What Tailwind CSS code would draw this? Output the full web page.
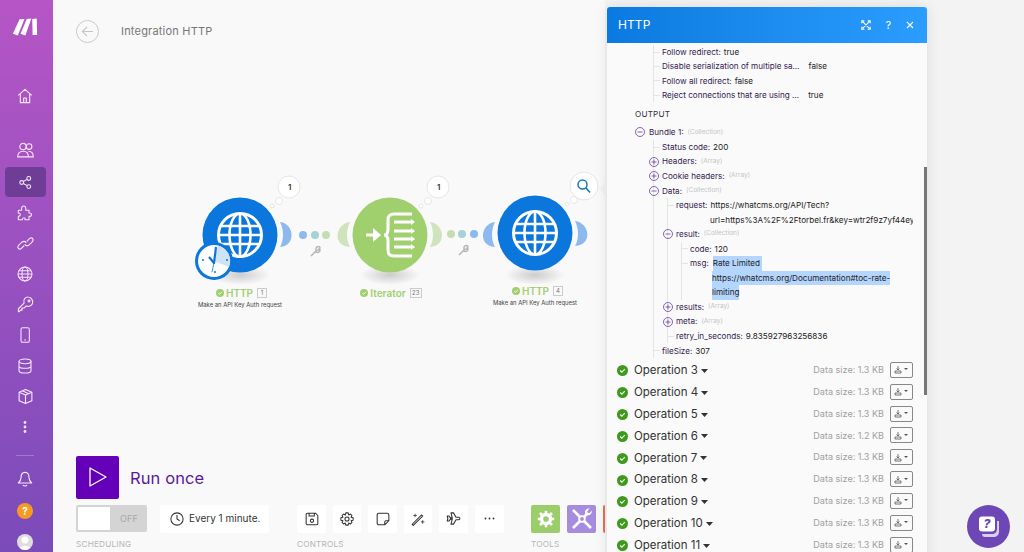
<!DOCTYPE html>
<html lang="en">
<head>
    <meta charset="UTF-8">
    <title>Integration HTTP</title>
    <script src="https://cdn.jsdelivr.net/npm/@tailwindcss/browser@4"></script>
</head>
<body class="w-[1024px] h-[552px] overflow-hidden flex bg-[#f9f9f9] font-['Inter',sans-serif] text-[#333]">

    <!-- Sidebar -->
    <nav class="w-[53px] h-full shrink-0 flex flex-col items-center pr-[3px] bg-gradient-to-b from-[#b655c6] to-[#7a4bb9] text-[#f7e6fb]">
        <svg class="mt-[18px] w-[26px] h-[18px]" viewBox="0 0 27 20" fill="#fff"><path d="M0 17.500 L7.500 1.500 L13 1 L5.500 19.500Z"/><path d="M8.500 17.500 L15.500 1 L20.500 0.500 L14 19.500Z"/><path d="M21.500 1 L26.500 0.500 L27 19 H22Z"/></svg>
        <svg class="mt-[52px] w-[16px] h-[16px]" viewBox="0 0 24 24" fill="none" stroke="currentColor" stroke-width="1.700" stroke-linejoin="round"><path d="M2 11 L12 2 L22 11 M5 9 V22 H19 V9 M10 22 V15 H14 V22"/></svg>
        <svg class="mt-[38px] w-[17px] h-[17px]" viewBox="0 0 24 24" fill="none" stroke="currentColor" stroke-width="1.600"><circle cx="8.500" cy="6.500" r="4.500"/><circle cx="17" cy="6.500" r="4"/><path d="M1 21 C1 15 5 13 9 13 C13 13 16 15 16 21Z"/><path d="M16 13 C20 13 23 16 23 21 H16"/></svg>
        <div class="mt-[8px] w-[41px] h-[30px] rounded-[4px] bg-[#6f3d96] flex items-center justify-center">
            <svg class="w-[13px] h-[13px]" viewBox="0 0 24 24" fill="none" stroke="currentColor" stroke-width="2"><circle cx="18" cy="4.500" r="3.500"/><circle cx="5" cy="12" r="3.500"/><circle cx="18" cy="19.500" r="3.500"/><path d="M8 10.300 L15 6.200 M8 13.700 L15 17.800"/></svg>
        </div>
        <svg class="mt-[8px] w-[16px] h-[16px]" viewBox="0 0 24 24" fill="none" stroke="currentColor" stroke-width="1.600" stroke-linejoin="round"><path d="M2 8 H7 C6 3 8 1.500 10 1.500 C12 1.500 14 3 13 8 H18 V12 C23 11 23 18 18 17 V22 H12 C13 18 8 18 8 22 H2 V17 C6 17 6 12 2 12Z"/></svg>
        <svg class="mt-[14px] w-[17px] h-[17px]" viewBox="0 0 24 24" fill="none" stroke="currentColor" stroke-width="1.600"><path d="M10 15 C6 20 3 21 2 19 C0 17 2 14 7 10 C10 8 12 9 13 11"/><path d="M14 9 C18 4 21 3 22 5 C24 7 22 10 17 14 C14 16 12 15 11 13"/></svg>
        <svg class="mt-[14px] w-[16px] h-[16px]" viewBox="0 0 24 24" fill="none" stroke="currentColor" stroke-width="1.600"><circle cx="12" cy="12" r="10.500"/><ellipse cx="12" cy="12" rx="4.500" ry="10.500"/><path d="M1.500 12 H22.500 M3 7 H21 M3 17 H21"/></svg>
        <svg class="mt-[14px] w-[17px] h-[17px]" viewBox="0 0 24 24" fill="none" stroke="currentColor" stroke-width="1.600" stroke-linejoin="round"><path d="M2 22 V18 L10 10 C8 4 13 1 16 1.500 C20 2 23 6 22 10 C21 14 16 15.500 13 14 L10 17 H7 V20 H5 L3 22Z"/><circle cx="17" cy="7" r="1.300"/></svg>
        <svg class="mt-[14px] w-[16px] h-[16px]" viewBox="0 0 24 24" fill="none" stroke="currentColor" stroke-width="1.600"><rect x="6" y="1" width="12.500" height="22" rx="2.500"/><path d="M11 19.500 H13.500"/></svg>
        <svg class="mt-[15px] w-[16px] h-[16px]" viewBox="0 0 24 24" fill="none" stroke="currentColor" stroke-width="1.600"><ellipse cx="12" cy="5" rx="9" ry="3.500"/><path d="M3 5 V19 C3 21 7 22.500 12 22.500 C17 22.500 21 21 21 19 V5 M3 12 C3 14 7 15.500 12 15.500 C17 15.500 21 14 21 12"/></svg>
        <svg class="mt-[14px] w-[17px] h-[17px]" viewBox="0 0 24 24" fill="none" stroke="currentColor" stroke-width="1.600" stroke-linejoin="round"><path d="M12 2 L21 6 V18 L12 22 L3 18 V6Z M3 6 L12 10 L21 6 M12 10 V22 M7.500 4 L16.500 8"/></svg>
        <svg class="mt-[16px] w-[4px] h-[12px]" viewBox="0 0 4 12" fill="currentColor"><circle cx="2" cy="1.500" r="1.400"/><circle cx="2" cy="6" r="1.400"/><circle cx="2" cy="10.500" r="1.400"/></svg>
        <div class="mt-[22px] w-[18px] h-px bg-white/25"></div>
        <svg class="mt-[15px] w-[16px] h-[16px]" viewBox="0 0 24 24" fill="none" stroke="currentColor" stroke-width="1.700" stroke-linejoin="round"><path d="M12 2 C7 2 6 6 6 10 C6 14 4 16 2 18 H22 C20 16 18 14 18 10 C18 6 17 2 12 2Z M9 21 C10 23 14 23 15 21"/></svg>
        <div class="mt-[16px] w-[16px] h-[16px] rounded-full bg-[#f59a23] text-white text-[10px] font-bold leading-[16px] text-center">?</div>
        <div class="mt-[15px] w-[16px] h-[16px] rounded-full bg-[#ddd] overflow-hidden flex justify-center">
            <svg class="w-[16px] h-[16px]" viewBox="0 0 16 16" fill="#fff"><circle cx="8" cy="6" r="3.500"/><path d="M1 17 C2 10 14 10 15 17Z"/></svg>
        </div>
    </nav>

    <!-- Main -->
    <main class="relative flex-1 h-full flex flex-col">
        <header class="flex items-center pl-[23px] pt-[20px]">
            <div class="w-[23px] h-[23px] rounded-full border border-[#c9c9c9] flex items-center justify-center">
                <svg class="w-[13px] h-[13px]" viewBox="0 0 14 14" fill="none" stroke="#c4c4c4" stroke-width="1.200"><path d="M13 7 H1.500 M6.500 2 L1.500 7 L6.500 12"/></svg>
            </div>
            <h1 class="ml-[22px] text-[11px] text-[#777] tracking-[0.2px]">Integration HTTP</h1>
        </header>

        <div class="flex-1"></div>

        <!-- Bottom controls -->
        <section class="pl-[23px] pb-[2px]">
            <div class="flex items-center">
                <button class="w-[43px] h-[43px] rounded-[2px] bg-[#6300b8] flex items-center justify-center">
                    <svg class="w-[20px] h-[22px]" viewBox="0 0 20 22" fill="none" stroke="#fff" stroke-width="1.300" stroke-linejoin="round"><path d="M2 2 L18 11 L2 20Z"/></svg>
                </button>
                <span class="ml-[11px] mt-[3px] text-[16.500px] text-[#5a189f] tracking-[0.1px]">Run once</span>
            </div>
            <div class="mt-[6px] flex text-[8.200px] text-[#b5b5b5] tracking-[0.2px]">
                <div class="w-[221px] flex flex-col">
                    <div class="flex items-center h-[28px]">
                        <div class="w-[71px] h-[27px] rounded-[2px] bg-[#d4d4d4] p-[2px] flex items-center">
                            <div class="w-[32px] h-full bg-white"></div>
                            <span class="ml-[10px] text-[9px] text-[#a8a8a8]">OFF</span>
                        </div>
                        <div class="ml-[13px] w-[109px] h-[28px] rounded-[2px] bg-white flex items-center pl-[10px] text-[#333] text-[10px] tracking-normal">
                            <svg class="w-[14px] h-[14px] mr-[5px]" viewBox="0 0 24 24" fill="none" stroke="#333" stroke-width="1.800"><circle cx="12" cy="12" r="10.500"/><path d="M12 5 V12 L16.500 15"/></svg>
                            Every 1 minute.
                        </div>
                    </div>
                    <span class="mt-[5px]">SCHEDULING</span>
                </div>
                <div class="w-[234px] flex flex-col">
                    <div class="flex gap-[7px] text-[#333]">
                        <div class="w-[29px] h-[28px] rounded-[2px] bg-white flex items-center justify-center">
                            <svg class="w-[14px] h-[14px]" viewBox="0 0 24 24" fill="none" stroke="currentColor" stroke-width="1.800" stroke-linejoin="round"><path d="M4 2 H18 L22 6 V20 C22 21 21 22 20 22 H4 C3 22 2 21 2 20 V4 C2 3 3 2 4 2Z M7 2 V7 H16 V2"/><circle cx="12" cy="15" r="2.800"/></svg>
                        </div>
                        <div class="w-[28px] h-[28px] rounded-[2px] bg-white flex items-center justify-center">
                            <svg class="w-[14px] h-[14px]" viewBox="0 0 24 24" fill="none" stroke="currentColor" stroke-width="1.800" stroke-linejoin="round"><path d="M10 1.500 H14 L15 5 L18 3.500 L20.500 6 L19 9 L22.500 10 V14 L19 15 L20.500 18 L18 20.500 L15 19 L14 22.500 H10 L9 19 L6 20.500 L3.500 18 L5 15 L1.500 14 V10 L5 9 L3.500 6 L6 3.500 L9 5Z"/><circle cx="12" cy="12" r="3.500"/></svg>
                        </div>
                        <div class="w-[29px] h-[28px] rounded-[2px] bg-white flex items-center justify-center">
                            <svg class="w-[14px] h-[14px]" viewBox="0 0 24 24" fill="none" stroke="currentColor" stroke-width="1.800" stroke-linejoin="round"><path d="M5 2 H19 C21 2 22 3 22 5 V15 L15 22 H5 C3 22 2 21 2 19 V5 C2 3 3 2 5 2Z M22 15 H17 C16 15 15 16 15 17 V22"/></svg>
                        </div>
                        <div class="w-[28px] h-[28px] rounded-[2px] bg-white flex items-center justify-center">
                            <svg class="w-[14px] h-[14px]" viewBox="0 0 24 24" fill="none" stroke="currentColor" stroke-width="1.800"><path d="M2 21 L18 5 L20 7 L4 23Z"/><path d="M7 3 V9 M4 6 H10 M20 14 V20 M17 17 H23" stroke-width="1.400"/></svg>
                        </div>
                        <div class="w-[29px] h-[28px] rounded-[2px] bg-white flex items-center justify-center">
                            <svg class="w-[15px] h-[15px]" viewBox="0 0 24 24" fill="none" stroke="currentColor" stroke-width="1.700" stroke-linejoin="round"><path d="M2 8 H5 L7 11 H10 L8 3 H12 L16 10 H20 C23 10 23 14 20 14 H16 L12 21 H8 L10 13 H7 L5 16 H2 L3 12Z"/></svg>
                        </div>
                        <div class="w-[29px] h-[28px] rounded-[2px] bg-white flex items-center justify-center">
                            <svg class="w-[11px] h-[3px]" viewBox="0 0 11 3" fill="currentColor"><circle cx="1.500" cy="1.500" r="0.900"/><circle cx="5.500" cy="1.500" r="0.900"/><circle cx="9.500" cy="1.500" r="0.900"/></svg>
                        </div>
                    </div>
                    <span class="mt-[5px]">CONTROLS</span>
                </div>
                <div class="flex flex-col">
                    <div class="flex gap-[7px]">
                        <div class="w-[29px] h-[28px] rounded-[2px] bg-[#9bcd6b] flex items-center justify-center">
                            <svg class="w-[18px] h-[18px]" viewBox="0 0 24 24" fill="none" stroke="#fff" stroke-width="4.500"><circle cx="12" cy="12" r="6"/><path d="M12 1 V5 M12 19 V23 M1 12 H5 M19 12 H23 M4 4 L7 7 M17 17 L20 20 M4 20 L7 17 M17 7 L20 4" stroke-width="3.500"/></svg>
                        </div>
                        <div class="w-[29px] h-[28px] rounded-[2px] bg-[#a68bdf] flex items-center justify-center">
                            <svg class="w-[24px] h-[24px]" viewBox="0 0 24 24" fill="none" stroke="#fff" stroke-width="2.600"><path d="M3 3 L21 21 M17 7 L3 21"/><path d="M22 3.500 L19 6.500 L17 5 L19.500 1.500 C16 1 14 4 15.500 7.500 C18 9.500 22 8 22 3.500Z" fill="#fff" stroke="none"/><circle cx="12" cy="12" r="2.800" fill="#a68bdf" stroke-width="1.800"/></svg>
                        </div>
                        <div class="w-[29px] h-[28px] rounded-[2px] bg-[#ea6f52]"></div>
                    </div>
                    <span class="mt-[5px]">TOOLS</span>
                </div>
            </div>
        </section>

        <!-- Scenario canvas, coordinates are the diagram itself -->
        <svg class="absolute left-0 top-0 w-[971px] h-[552px]" viewBox="53 0 971 552" fill="none">
            <defs>
                <radialGradient id="nodeShadow"><stop offset="0" stop-color="#000" stop-opacity="0.180"/><stop offset="1" stop-color="#000" stop-opacity="0"/></radialGradient>
                <g id="globe" stroke="#fff" stroke-width="3">
                    <circle cx="0" cy="0" r="21.500"/>
                    <ellipse cx="0" cy="0" rx="10.500" ry="21.500" stroke-width="2.600"/>
                    <path d="M0 -21.500 V21.500 M-21.500 0 H21.500 M-19.500 -9 H19.500 M-19.500 9 H19.500" stroke-width="2.600"/>
                </g>
            </defs>

            <ellipse cx="240" cy="275" rx="30" ry="10" fill="url(#nodeShadow)"/>
            <ellipse cx="390" cy="275" rx="30" ry="10" fill="url(#nodeShadow)"/>
            <ellipse cx="535" cy="275" rx="30" ry="10" fill="url(#nodeShadow)"/>

            <!-- HTTP 1 -->
            <path d="M280 222 C295 224 296 246 280 247 C284 240 284 230 280 222Z" fill="#8db9ee"/>
            <circle cx="240" cy="235" r="37.500" fill="#0b76dc"/>
            <use href="#globe" x="240" y="235"/>
            <circle cx="214" cy="261" r="19" fill="#0b76dc"/>
            <circle cx="214" cy="261" r="16" fill="#fff"/>
            <path d="M214 261 L218 245.500 A16 16 0 0 1 229 267Z" fill="#cfe3f7"/>
            <path d="M216 247 L214 263 L209 257" stroke="#0b76dc" stroke-width="2.200" stroke-linejoin="round"/>
            <path d="M214 263 L212 272" stroke="#0b76dc" stroke-width="0.800"/>
            <circle cx="203" cy="260" r="1" fill="#0b76dc"/><circle cx="227" cy="260" r="1" fill="#0b76dc"/><circle cx="215" cy="272" r="1" fill="#0b76dc"/>

            <!-- connector 1 -->
            <circle cx="303" cy="235" r="4" fill="#8db9ee"/><circle cx="315" cy="235" r="4" fill="#a6d2d3"/><circle cx="326" cy="235" r="4" fill="#c5deb1"/>
            <path d="M311 256 L317 250 M316 248 C317 246 320 246 320 248 L318 250 L320 250 C320 252 318 253 316 252Z" stroke="#b5b5b5" stroke-width="1.500"/>
            <path d="M350 222 C335 224 332 246 350 247 C346 240 346 230 350 222Z" fill="#cfe3bd"/>

            <!-- Iterator -->
            <circle cx="390" cy="235" r="37.500" fill="#a0cf6e"/>
            <path d="M412 214 H394 Q388 214 388 220 V229 Q388 235 384 235 Q388 235 388 241 V250 Q388 256 394 256 H412" stroke="#fff" stroke-width="3"/>
            <path d="M394 222 H411 M394 231 H411 M394 239 H411 M394 247 H411" stroke="#fff" stroke-width="3"/>
            <path d="M411 219 L415 222 L411 225Z M411 228 L415 231 L411 234Z M411 236 L415 239 L411 242Z M411 244 L415 247 L411 250Z" fill="#fff"/>
            <path d="M366 235 H376" stroke="#fff" stroke-width="3"/>
            <path d="M373 228 L381 235 L373 242Z" fill="#fff"/>
            <path d="M430 222 C445 224 447 246 430 247 C434 240 434 230 430 222Z" fill="#cfe3bd"/>

            <!-- connector 2 -->
            <circle cx="451" cy="234" r="4" fill="#c5deb1"/><circle cx="462" cy="234" r="4" fill="#a6d2d3"/><circle cx="474" cy="234" r="4" fill="#8db9ee"/>
            <path d="M459 255 L465 249 M464 247 C465 245 468 245 468 247 L466 249 L468 249 C468 251 466 252 464 251Z" stroke="#b5b5b5" stroke-width="1.500"/>

            <!-- HTTP 4 -->
            <path d="M495 222 C480 224 478 246 495 247 C491 240 491 230 495 222Z" fill="#8db9ee"/>
            <circle cx="535" cy="233" r="37.500" fill="#0b76dc"/>
            <use href="#globe" x="535" y="233"/>
            <path d="M575 221 C590 223 593 245 575 246 C579 239 579 229 575 221Z" fill="#8db9ee"/>

            <!-- bubbles -->
            <g fill="#fff" stroke="#e6e6e6" stroke-width="1">
                <circle cx="289" cy="187" r="11"/><circle cx="279" cy="201" r="3.500"/><circle cx="272" cy="206" r="2"/>
                <circle cx="438" cy="187" r="11"/><circle cx="428" cy="201" r="3.500"/><circle cx="421" cy="206" r="2"/>
                <circle cx="584" cy="186" r="14"/><circle cx="574" cy="200" r="3.500"/><circle cx="567" cy="204" r="2"/>
            </g>
            <circle cx="582.500" cy="184.500" r="4.500" stroke="#1a78b5" stroke-width="1.500"/>
            <path d="M586 188 L590 192.500" stroke="#1a78b5" stroke-width="1.700"/>
        </svg>

        <span class="absolute left-[235px] top-[181px] w-[2px] text-[8px] font-semibold text-[#333] leading-[12px]">1</span>
        <span class="absolute left-[384px] top-[181px] w-[2px] text-[8px] font-semibold text-[#333] leading-[12px]">1</span>

        <!-- Node labels -->
        <div class="absolute left-[127px] top-[286px] w-[120px] flex flex-col items-center">
            <div class="ml-[3px] flex items-center h-[14px] text-[10px] font-semibold text-[#a3cf72]">
                <svg class="w-[8px] h-[8px] mr-[2px]" viewBox="0 0 8 8"><circle cx="4" cy="4" r="4" fill="#a0cf6e"/><path d="M2.200 4 L3.500 5.300 L5.800 2.900" fill="none" stroke="#fff" stroke-width="0.900"/></svg>HTTP
                <span class="ml-[4px] w-[10px] h-[10px] border border-[#ccc] text-[6px] font-normal text-[#777] leading-[8px] text-center">1</span>
            </div>
            <span class="text-[5.900px] leading-[10px] text-[#444] whitespace-nowrap">Make an API Key Auth request</span>
        </div>
        <div class="absolute left-[277px] top-[286px] w-[120px] flex flex-col items-center">
            <div class="ml-[2px] flex items-center h-[14px] text-[10px] font-semibold text-[#a3cf72]">
                <svg class="w-[8px] h-[8px] mr-[2px]" viewBox="0 0 8 8"><circle cx="4" cy="4" r="4" fill="#a0cf6e"/><path d="M2.200 4 L3.500 5.300 L5.800 2.900" fill="none" stroke="#fff" stroke-width="0.900"/></svg>Iterator
                <span class="ml-[4px] w-[12px] h-[10px] border border-[#ccc] text-[6px] font-normal text-[#777] leading-[8px] text-center">23</span>
            </div>
        </div>
        <div class="absolute left-[422px] top-[284px] w-[120px] flex flex-col items-center">
            <div class="ml-[5px] flex items-center h-[14px] text-[10px] font-semibold text-[#a3cf72]">
                <svg class="w-[8px] h-[8px] mr-[2px]" viewBox="0 0 8 8"><circle cx="4" cy="4" r="4" fill="#a0cf6e"/><path d="M2.200 4 L3.500 5.300 L5.800 2.900" fill="none" stroke="#fff" stroke-width="0.900"/></svg>HTTP
                <span class="ml-[4px] w-[10px] h-[10px] border border-[#ccc] text-[6px] font-normal text-[#777] leading-[8px] text-center">4</span>
            </div>
            <span class="text-[5.900px] leading-[10px] text-[#444] whitespace-nowrap">Make an API Key Auth request</span>
        </div>

        <!-- Log panel backdrop -->
        <div class="absolute left-[552px] top-0 right-0 bottom-0 bg-[#f3f3f3]"></div>
        <div class="absolute left-[546px] top-[180px] w-0 h-0 border-y-[9px] border-y-transparent border-r-[8px] border-r-[#f3f3f3]"></div>

        <!-- Log panel -->
        <div class="absolute left-[554px] top-[7px] w-[320px] h-[560px] rounded-t-[3px] bg-[#fafafa] shadow-[0_0_14px_rgba(0,0,0,0.1)] overflow-hidden flex flex-col">
            <div class="h-[36px] shrink-0 flex items-center pl-[11px] pr-[13px] bg-gradient-to-r from-[#0a7ae0] to-[#2a9dff] text-white">
                <span class="text-[12px] tracking-[0.1px] flex-1">HTTP</span>
                <svg class="w-[10px] h-[10px] mr-[14px]" viewBox="0 0 12 12" fill="none" stroke="#fff" stroke-width="1.300"><path d="M1 4 V1 H4 M8 1 H11 V4 M1 8 V11 H4 M11 8 V11 H8 M2 2 L10 10 M10 2 L2 10"/></svg>
                <span class="text-[11px] mr-[15px] leading-none">?</span>
                <svg class="w-[8px] h-[8px]" viewBox="0 0 8 8" fill="none" stroke="#fff" stroke-width="1.100"><path d="M1 1 L7 7 M7 1 L1 7"/></svg>
            </div>

            <div class="relative flex-1 text-[8.150px] text-[#222] whitespace-nowrap">
                <div class="absolute right-0 top-[124px] w-[3px] h-[228px] bg-[#777]"></div>

                <!-- Input tail -->
                <div class="ml-[46px] mt-[2px] border-l border-[#e4e4e4] [&>div]:h-[14.300px] [&>div]:flex [&>div]:items-center [&_b]:font-normal [&_b]:text-[#33224f] [&_b]:mr-[3px]">
                    <div><i class="w-[6px] h-px bg-[#e4e4e4] mr-[2px]"></i><b>Follow redirect:</b>true</div>
                    <div><i class="w-[6px] h-px bg-[#e4e4e4] mr-[2px]"></i><b>Disable serialization of multiple sa…</b><span class="ml-[6px]">false</span></div>
                    <div><i class="w-[6px] h-px bg-[#e4e4e4] mr-[2px]"></i><b>Follow all redirect:</b>false</div>
                    <div><i class="w-[6px] h-px bg-[#e4e4e4] mr-[2px]"></i><b>Reject connections that are using …</b><span class="ml-[6px]">true</span></div>
                </div>

                <p class="pl-[28px] mt-[3px] h-[20px] leading-[18px] text-[#333] tracking-[0.2px]">OUTPUT</p>

                <!-- Output tree -->
                <div class="[&_.row]:h-[14.550px] [&_.row]:flex [&_.row]:items-center [&_b]:font-normal [&_b]:text-[#33224f] [&_b]:mr-[3px] [&_em]:not-italic [&_em]:text-[6.500px] [&_em]:text-[#c4c4c4] [&_em]:ml-[1px]">
                    <div class="row pl-[28px]">
                        <svg class="w-[10px] h-[10px] mr-[4px]" viewBox="0 0 10 10" fill="none" stroke="#6b3fa0" stroke-width="0.800"><circle cx="5" cy="5" r="4.500"/><path d="M2.500 5 H7.500"/></svg>
                        <b>Bundle 1:</b><em>(Collection)</em>
                    </div>
                    <div class="ml-[46px] border-l border-[#e4e4e4]">
                        <div class="row"><i class="w-[6px] h-px bg-[#e4e4e4] mr-[2px]"></i><b>Status code:</b>200</div>
                        <div class="row -ml-[5px]">
                            <svg class="w-[10px] h-[10px] mr-[3px]" viewBox="0 0 10 10" fill="none" stroke="#6b3fa0" stroke-width="0.800"><circle cx="5" cy="5" r="4.500"/><path d="M2.500 5 H7.500 M5 2.500 V7.500"/></svg>
                            <b>Headers:</b><em>(Array)</em>
                        </div>
                        <div class="row -ml-[5px]">
                            <svg class="w-[10px] h-[10px] mr-[3px]" viewBox="0 0 10 10" fill="none" stroke="#6b3fa0" stroke-width="0.800"><circle cx="5" cy="5" r="4.500"/><path d="M2.500 5 H7.500 M5 2.500 V7.500"/></svg>
                            <b>Cookie headers:</b><em>(Array)</em>
                        </div>
                        <div class="row -ml-[5px]">
                            <svg class="w-[10px] h-[10px] mr-[3px]" viewBox="0 0 10 10" fill="none" stroke="#6b3fa0" stroke-width="0.800"><circle cx="5" cy="5" r="4.500"/><path d="M2.500 5 H7.500"/></svg>
                            <b>Data:</b><em>(Collection)</em>
                        </div>
                        <div class="ml-[13px] border-l border-[#e4e4e4]">
                            <div class="row"><i class="w-[6px] h-px bg-[#e4e4e4] mr-[2px]"></i><b>request:</b>https://whatcms.org/API/Tech?</div>
                            <div class="row pl-[42px] w-[245px] overflow-hidden">url=https%3A%2F%2Ftorbel.fr&amp;key=wtr2f9z7yf44ey7</div>
                            <div class="row -ml-[5px]">
                                <svg class="w-[10px] h-[10px] mr-[3px]" viewBox="0 0 10 10" fill="none" stroke="#6b3fa0" stroke-width="0.800"><circle cx="5" cy="5" r="4.500"/><path d="M2.500 5 H7.500"/></svg>
                                <b>result:</b><em>(Collection)</em>
                            </div>
                            <div class="ml-[13px] border-l border-[#e4e4e4]">
                                <div class="row"><i class="w-[6px] h-px bg-[#e4e4e4] mr-[2px]"></i><b>code:</b>120</div>
                                <div class="row"><i class="w-[6px] h-px bg-[#e4e4e4] mr-[2px]"></i><b>msg:</b><span class="ml-[1px] bg-[#b4d5fe] leading-[14.550px] pr-[2px]">Rate Limited</span></div>
                                <div class="row pl-[30px]"><span class="bg-[#b4d5fe] leading-[14.550px]">https://whatcms.org/Documentation#toc-rate-</span></div>
                                <div class="row pl-[30px]"><span class="bg-[#b4d5fe] leading-[14.550px]">limiting</span></div>
                            </div>
                            <div class="row -ml-[5px]">
                                <svg class="w-[10px] h-[10px] mr-[3px]" viewBox="0 0 10 10" fill="none" stroke="#6b3fa0" stroke-width="0.800"><circle cx="5" cy="5" r="4.500"/><path d="M2.500 5 H7.500 M5 2.500 V7.500"/></svg>
                                <b>results:</b><em>(Array)</em>
                            </div>
                            <div class="row -ml-[5px]">
                                <svg class="w-[10px] h-[10px] mr-[3px]" viewBox="0 0 10 10" fill="none" stroke="#6b3fa0" stroke-width="0.800"><circle cx="5" cy="5" r="4.500"/><path d="M2.500 5 H7.500 M5 2.500 V7.500"/></svg>
                                <b>meta:</b><em>(Array)</em>
                            </div>
                            <div class="row"><i class="w-[6px] h-px bg-[#e4e4e4] mr-[2px]"></i><b>retry_in_seconds:</b>9.835927963256836</div>
                        </div>
                        <div class="row"><i class="w-[6px] h-px bg-[#e4e4e4] mr-[2px]"></i><b>fileSize:</b>307</div>
                    </div>
                </div>

                <!-- Operations -->
                <div class="mt-[2px] pl-[10px] pr-[14px] [&>div]:h-[21.850px] [&>div]:flex [&>div]:items-center [&_.op]:text-[11.500px] [&_.op]:text-[#333] [&_.sz]:ml-auto [&_.sz]:text-[9.050px] [&_.sz]:text-[#a0a0a0] [&_.sz]:-mt-[2px]">
                    <div><svg class="w-[11px] h-[11px] mr-[6px]" viewBox="0 0 12 12"><circle cx="6" cy="6" r="6" fill="#3e9a1c"/><path d="M3.500 6 L5.300 7.800 L8.500 4.500" fill="none" stroke="#fff" stroke-width="1.200"/></svg><span class="op">Operation 3</span><svg class="w-[7px] h-[4px] ml-[3px]" viewBox="0 0 7 4" fill="#333"><path d="M0 0 H7 L3.500 4Z"/></svg><span class="sz">Data size: 1.3 KB</span><span class="ml-[6px] -mt-[2px] w-[23px] h-[16px] rounded-[2px] border border-[#888] flex items-center justify-center"><svg class="w-[15px] h-[9px]" viewBox="0 0 15 9" fill="none" stroke="#555" stroke-width="0.800"><path d="M4 1 V5 M2.500 3.500 L4 5 L5.500 3.500 M1 6 V8 H7 V6 H1"/><path d="M10 3 H14 L12 5Z" fill="#555" stroke="none"/></svg></span></div>
                    <div><svg class="w-[11px] h-[11px] mr-[6px]" viewBox="0 0 12 12"><circle cx="6" cy="6" r="6" fill="#3e9a1c"/><path d="M3.500 6 L5.300 7.800 L8.500 4.500" fill="none" stroke="#fff" stroke-width="1.200"/></svg><span class="op">Operation 4</span><svg class="w-[7px] h-[4px] ml-[3px]" viewBox="0 0 7 4" fill="#333"><path d="M0 0 H7 L3.500 4Z"/></svg><span class="sz">Data size: 1.3 KB</span><span class="ml-[6px] -mt-[2px] w-[23px] h-[16px] rounded-[2px] border border-[#888] flex items-center justify-center"><svg class="w-[15px] h-[9px]" viewBox="0 0 15 9" fill="none" stroke="#555" stroke-width="0.800"><path d="M4 1 V5 M2.500 3.500 L4 5 L5.500 3.500 M1 6 V8 H7 V6 H1"/><path d="M10 3 H14 L12 5Z" fill="#555" stroke="none"/></svg></span></div>
                    <div><svg class="w-[11px] h-[11px] mr-[6px]" viewBox="0 0 12 12"><circle cx="6" cy="6" r="6" fill="#3e9a1c"/><path d="M3.500 6 L5.300 7.800 L8.500 4.500" fill="none" stroke="#fff" stroke-width="1.200"/></svg><span class="op">Operation 5</span><svg class="w-[7px] h-[4px] ml-[3px]" viewBox="0 0 7 4" fill="#333"><path d="M0 0 H7 L3.500 4Z"/></svg><span class="sz">Data size: 1.3 KB</span><span class="ml-[6px] -mt-[2px] w-[23px] h-[16px] rounded-[2px] border border-[#888] flex items-center justify-center"><svg class="w-[15px] h-[9px]" viewBox="0 0 15 9" fill="none" stroke="#555" stroke-width="0.800"><path d="M4 1 V5 M2.500 3.500 L4 5 L5.500 3.500 M1 6 V8 H7 V6 H1"/><path d="M10 3 H14 L12 5Z" fill="#555" stroke="none"/></svg></span></div>
                    <div><svg class="w-[11px] h-[11px] mr-[6px]" viewBox="0 0 12 12"><circle cx="6" cy="6" r="6" fill="#3e9a1c"/><path d="M3.500 6 L5.300 7.800 L8.500 4.500" fill="none" stroke="#fff" stroke-width="1.200"/></svg><span class="op">Operation 6</span><svg class="w-[7px] h-[4px] ml-[3px]" viewBox="0 0 7 4" fill="#333"><path d="M0 0 H7 L3.500 4Z"/></svg><span class="sz">Data size: 1.2 KB</span><span class="ml-[6px] -mt-[2px] w-[23px] h-[16px] rounded-[2px] border border-[#888] flex items-center justify-center"><svg class="w-[15px] h-[9px]" viewBox="0 0 15 9" fill="none" stroke="#555" stroke-width="0.800"><path d="M4 1 V5 M2.500 3.500 L4 5 L5.500 3.500 M1 6 V8 H7 V6 H1"/><path d="M10 3 H14 L12 5Z" fill="#555" stroke="none"/></svg></span></div>
                    <div><svg class="w-[11px] h-[11px] mr-[6px]" viewBox="0 0 12 12"><circle cx="6" cy="6" r="6" fill="#3e9a1c"/><path d="M3.500 6 L5.300 7.800 L8.500 4.500" fill="none" stroke="#fff" stroke-width="1.200"/></svg><span class="op">Operation 7</span><svg class="w-[7px] h-[4px] ml-[3px]" viewBox="0 0 7 4" fill="#333"><path d="M0 0 H7 L3.500 4Z"/></svg><span class="sz">Data size: 1.3 KB</span><span class="ml-[6px] -mt-[2px] w-[23px] h-[16px] rounded-[2px] border border-[#888] flex items-center justify-center"><svg class="w-[15px] h-[9px]" viewBox="0 0 15 9" fill="none" stroke="#555" stroke-width="0.800"><path d="M4 1 V5 M2.500 3.500 L4 5 L5.500 3.500 M1 6 V8 H7 V6 H1"/><path d="M10 3 H14 L12 5Z" fill="#555" stroke="none"/></svg></span></div>
                    <div><svg class="w-[11px] h-[11px] mr-[6px]" viewBox="0 0 12 12"><circle cx="6" cy="6" r="6" fill="#3e9a1c"/><path d="M3.500 6 L5.300 7.800 L8.500 4.500" fill="none" stroke="#fff" stroke-width="1.200"/></svg><span class="op">Operation 8</span><svg class="w-[7px] h-[4px] ml-[3px]" viewBox="0 0 7 4" fill="#333"><path d="M0 0 H7 L3.500 4Z"/></svg><span class="sz">Data size: 1.3 KB</span><span class="ml-[6px] -mt-[2px] w-[23px] h-[16px] rounded-[2px] border border-[#888] flex items-center justify-center"><svg class="w-[15px] h-[9px]" viewBox="0 0 15 9" fill="none" stroke="#555" stroke-width="0.800"><path d="M4 1 V5 M2.500 3.500 L4 5 L5.500 3.500 M1 6 V8 H7 V6 H1"/><path d="M10 3 H14 L12 5Z" fill="#555" stroke="none"/></svg></span></div>
                    <div><svg class="w-[11px] h-[11px] mr-[6px]" viewBox="0 0 12 12"><circle cx="6" cy="6" r="6" fill="#3e9a1c"/><path d="M3.500 6 L5.300 7.800 L8.500 4.500" fill="none" stroke="#fff" stroke-width="1.200"/></svg><span class="op">Operation 9</span><svg class="w-[7px] h-[4px] ml-[3px]" viewBox="0 0 7 4" fill="#333"><path d="M0 0 H7 L3.500 4Z"/></svg><span class="sz">Data size: 1.3 KB</span><span class="ml-[6px] -mt-[2px] w-[23px] h-[16px] rounded-[2px] border border-[#888] flex items-center justify-center"><svg class="w-[15px] h-[9px]" viewBox="0 0 15 9" fill="none" stroke="#555" stroke-width="0.800"><path d="M4 1 V5 M2.500 3.500 L4 5 L5.500 3.500 M1 6 V8 H7 V6 H1"/><path d="M10 3 H14 L12 5Z" fill="#555" stroke="none"/></svg></span></div>
                    <div><svg class="w-[11px] h-[11px] mr-[6px]" viewBox="0 0 12 12"><circle cx="6" cy="6" r="6" fill="#3e9a1c"/><path d="M3.500 6 L5.300 7.800 L8.500 4.500" fill="none" stroke="#fff" stroke-width="1.200"/></svg><span class="op">Operation 10</span><svg class="w-[7px] h-[4px] ml-[3px]" viewBox="0 0 7 4" fill="#333"><path d="M0 0 H7 L3.500 4Z"/></svg><span class="sz">Data size: 1.3 KB</span><span class="ml-[6px] -mt-[2px] w-[23px] h-[16px] rounded-[2px] border border-[#888] flex items-center justify-center"><svg class="w-[15px] h-[9px]" viewBox="0 0 15 9" fill="none" stroke="#555" stroke-width="0.800"><path d="M4 1 V5 M2.500 3.500 L4 5 L5.500 3.500 M1 6 V8 H7 V6 H1"/><path d="M10 3 H14 L12 5Z" fill="#555" stroke="none"/></svg></span></div>
                    <div><svg class="w-[11px] h-[11px] mr-[6px]" viewBox="0 0 12 12"><circle cx="6" cy="6" r="6" fill="#3e9a1c"/><path d="M3.500 6 L5.300 7.800 L8.500 4.500" fill="none" stroke="#fff" stroke-width="1.200"/></svg><span class="op">Operation 11</span><svg class="w-[7px] h-[4px] ml-[3px]" viewBox="0 0 7 4" fill="#333"><path d="M0 0 H7 L3.500 4Z"/></svg><span class="sz">Data size: 1.3 KB</span><span class="ml-[6px] -mt-[2px] w-[23px] h-[16px] rounded-[2px] border border-[#888] flex items-center justify-center"><svg class="w-[15px] h-[9px]" viewBox="0 0 15 9" fill="none" stroke="#555" stroke-width="0.800"><path d="M4 1 V5 M2.500 3.500 L4 5 L5.500 3.500 M1 6 V8 H7 V6 H1"/><path d="M10 3 H14 L12 5Z" fill="#555" stroke="none"/></svg></span></div>
                </div>
            </div>
        </div>

        <!-- Help bubble -->
        <button class="absolute left-[914px] top-[505px] w-[43px] h-[43px] rounded-full bg-[#6d47b5] flex items-center justify-center">
            <svg class="w-[24px] h-[24px]" viewBox="0 0 24 24" fill="none"><path d="M20 6 H22 V16 C22 20 20 22 16 22 H8 C6 22 5 21 5 19 H15 C18 19 20 17 20 14Z" fill="#d9cdf0"/><rect x="2" y="1.500" width="16" height="15" rx="3" fill="#fff"/><text x="10" y="13" text-anchor="middle" font-size="12" font-weight="800" font-style="italic" fill="#6d47b5" font-family="Inter">?</text></svg>
        </button>
    </main>
</body>
</html>
